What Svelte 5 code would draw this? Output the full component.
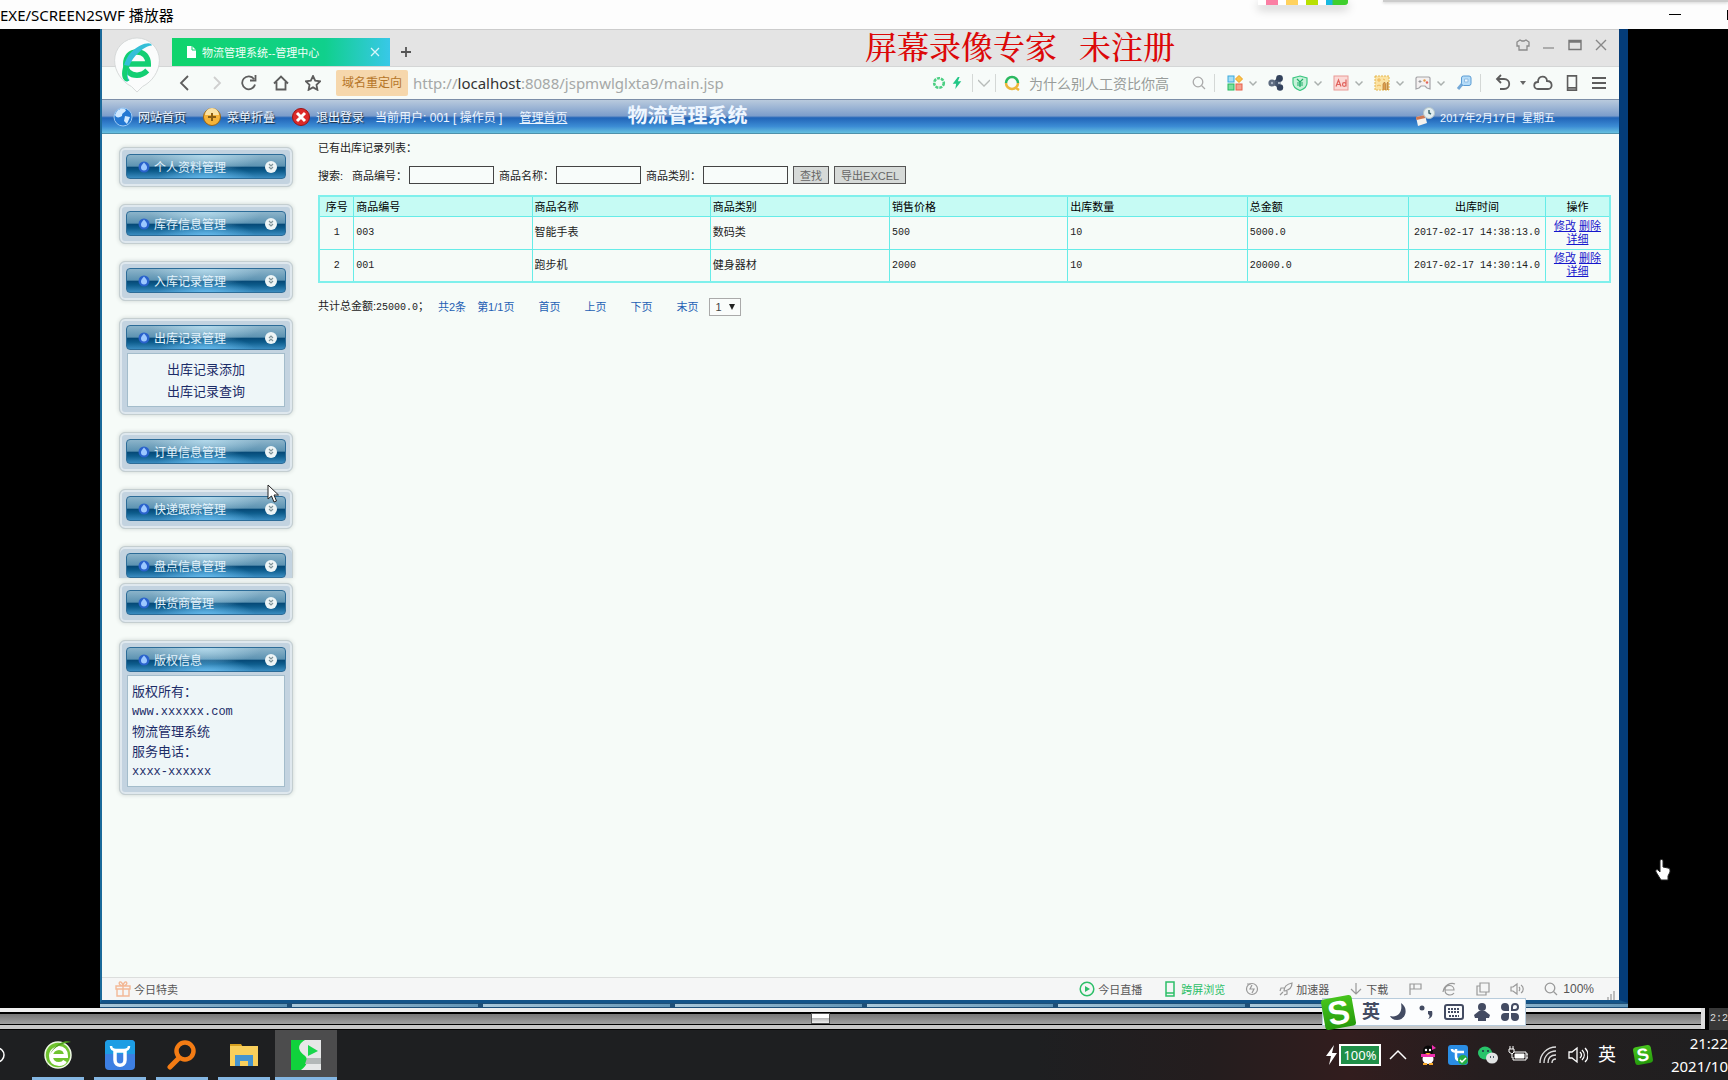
<script lang="ts">
  const columns = [
    { title: "序号", width: 2.7, center: true },
    { title: "商品编号", width: 13.8 },
    { title: "商品名称", width: 13.8 },
    { title: "商品类别", width: 13.9 },
    { title: "销售价格", width: 13.8 },
    { title: "出库数量", width: 13.9 },
    { title: "总金额", width: 12.5 },
    { title: "出库时间", width: 10.6, center: true },
    { title: "操作", width: 5, center: true },
  ];

  const records = [
    ["1", "003", "智能手表", "数码类", "500", "10", "5000.0", "2017-02-17 14:38:13.0"],
    ["2", "001", "跑步机", "健身器材", "2000", "10", "20000.0", "2017-02-17 14:30:14.0"],
  ];

  const menus = [
    { title: "个人资料管理" },
    { title: "库存信息管理" },
    { title: "入库记录管理" },
    { title: "出库记录管理", items: ["出库记录添加", "出库记录查询"] },
    { title: "订单信息管理" },
    { title: "快递跟踪管理" },
    { title: "盘点信息管理", cut: true },
    { title: "供货商管理" },
    {
      title: "版权信息",
      lines: ["版权所有：", "www.xxxxxx.com", "物流管理系统", "服务电话：", "xxxx-xxxxxx"],
    },
  ];

  const filters = [
    { id: "code", label: "商品编号：" },
    { id: "name", label: "商品名称：" },
    { id: "kind", label: "商品类别：" },
  ];

  const pages = ["首页", "上页", "下页", "末页"];
  const extensions = ["grid", "share", "shield", "ad", "shot", "game", "key"];
  const apps = ["browser", "bull", "search", "folder", "player"];
  const tasks = [0, 1, 2, 3, 4, 5, 6, 7];
</script>

{#snippet chevron()}
  <svg class="chev" viewBox="0 0 8 8"><path d="M0.5 2.5 4 6 7.500 2.500" fill="none" stroke="#aab0ae" stroke-width="1.500" /></svg>
{/snippet}

{#snippet magnifier(color)}
  <svg class="i14" viewBox="0 0 14 14" fill="none" stroke={color} stroke-width="1.300"><circle cx="6" cy="6" r="4.800" /><path d="M9.500 9.500 13 13" /></svg>
{/snippet}

{#snippet extension(name)}
  <svg class="i16" viewBox="0 0 16 16" fill="none">
    {#if name === "grid"}
      <rect x="1" y="1" width="6" height="6" fill="#a5ddf5" stroke="#3ba9dc" />
      <path d="M12 .5 15.500 4 12 7.500 8.500 4Z" fill="#f8c44c" stroke="#ef9d1a" />
      <rect x="1" y="9" width="6" height="6" fill="#7ddf9f" stroke="#25b95f" />
      <rect x="9" y="9" width="6" height="6" fill="#f5a08f" stroke="#e8604a" />
    {:else if name === "share"}
      <path d="M5 8 11 3M5 8l7 5M5 8h6" stroke="#46566e" stroke-width="2" />
      <circle cx="4" cy="8" r="3.600" fill="#5d6b80" /><circle cx="11.500" cy="3.500" r="3.400" fill="#33425c" />
      <circle cx="12" cy="12.500" r="3.200" fill="#33425c" /><circle cx="10" cy="8" r="2.500" fill="#46566e" />
      <circle cx="4" cy="8" r="1.200" fill="#a9b5c4" /><circle cx="11" cy="8" r="1" fill="#cfd8e2" />
    {:else if name === "shield"}
      <path d="M8 1 15 3v5c0 4-3 6-7 7.500C4 14 1 12 1 8V3Z" fill="#c5f1d8" stroke="#3cc681" stroke-width="1.200" />
      <path d="m5 4 3 3 3-3M8 7v5M5 8h6M5 10h6" stroke="#1fae69" stroke-width="1.200" />
    {:else if name === "ad"}
      <rect x="1" y="1" width="14" height="14" fill="#fbd9d6" stroke="#e99a96" />
      <path d="M3 11.500 5.500 5 8 11.500M4 9.500h3M13 4.500v7M13 9.500c0-2.500-3.500-2.500-3.500 0s3.500 2.500 3.500 0" stroke="#e0625c" stroke-width="1.200" />
    {:else if name === "shot"}
      <rect x="1" y="1" width="14" height="14" fill="#fbe3a4" stroke="#e4b64e" stroke-dasharray="2 1" />
      <path d="M4 4h2v2H4zM9 4l2 1M3 11l2-1 2 1" stroke="#f0b85a" stroke-width="1" />
      <path d="M9 15V9l1.500-2 1 2v6M13 15V8l1-1v8" fill="#e0a04c" stroke="#b9803c" stroke-width=".8" />
    {:else if name === "game"}
      <path d="M2 2h12l1 1v11l-3-1-2-2H6l-2 2-3 1V3Z" fill="#f4f1f1" stroke="#a5a5a8" stroke-width="1.200" />
      <path d="M3.500 6.500h3M5 5v3" stroke="#97979a" /><circle cx="9.500" cy="5.500" r="1.200" fill="#e89a4a" /><circle cx="12" cy="7.500" r="1.200" fill="#e0645a" />
    {:else}
      <path d="M7 8 2 14" stroke="#75a9d8" stroke-width="3" />
      <rect x="5.500" y="1" width="9.500" height="9.500" rx="2" fill="#b5dcf8" stroke="#5b9cd4" />
      <path d="M8.500 4h3.500v3H8.500z" fill="#edf7ff" stroke="#8fbde4" />
    {/if}
  </svg>
{/snippet}

<div class="screen">
  <header class="player-title">
    <span class="caption">EXE/SCREEN2SWF 播放器</span>
    <div class="sticker"><i class="pink"></i><i class="yellow"></i><i class="lime"></i><i class="green"></i></div>
    <div class="top-shadow"></div>
    <button class="player-min" aria-label="最小化"></button>
    <span class="player-max"></span>
  </header>

  <div class="stage">
    <div class="browser">
      <div class="tab-strip">
        <div class="logo">
          <svg viewBox="0 0 50 60">
            <path d="M25 1a24 24 0 0 1 24 24c0 12-8 23-18 28l-6 6-6-6C9 48 1 37 1 25A24 24 0 0 1 25 1Z" fill="#fbfcfc" stroke="#d4d7d7" />
            <path d="M13 29h24c0-8-5-13-12-13s-12 5-12 13 5 12 12 12c5 0 8-2 11-5" fill="none" stroke="#12cf72" stroke-width="6" />
            <path d="M41 9C40 4 28 7 19 16 11 24 7 40 12 47c1 1 3 1 5-1-4-3-2-15 4-23S35 9 41 9Z" fill="#35bfd8" />
            <path d="M11 30c-4 9-2 20 6 17-4-1-3-10 0-16Z" fill="#12cf72" />
          </svg>
        </div>
        <div class="tab">
          <svg class="i12" viewBox="0 0 12 12"><path d="M2 0h5l4 4v8H2Z" fill="#fff" /><path d="M7 0v4h4" fill="none" stroke="#12cf72" /></svg>
          <span>物流管理系统--管理中心</span>
          <button aria-label="关闭标签"><svg class="i10" viewBox="0 0 10 10"><path d="m1 1 8 8M9 1 1 9" stroke="#d8f6fa" stroke-width="1.300" /></svg></button>
        </div>
        <button class="new-tab" aria-label="新建标签"><svg class="i10" viewBox="0 0 10 10"><path d="M5 0v10M0 5h10" stroke="#555" stroke-width="1.800" /></svg></button>
        <div class="window-buttons">
          <button aria-label="皮肤"><svg class="i14" viewBox="0 0 14 14"><path d="M4 2 1 4v4h2v4h8V8h2V4l-3-2-2 1H6Z" fill="none" stroke="#8a8a8a" stroke-width="1.300" /></svg></button>
          <button aria-label="最小化"><svg class="i14" viewBox="0 0 14 14"><path d="M1 10h11" stroke="#9a9a9a" stroke-width="1.500" /></svg></button>
          <button aria-label="最大化"><svg class="i14" viewBox="0 0 14 14"><path d="M1 2.500h12v9H1ZM1 4h12" fill="none" stroke="#777" stroke-width="1.400" /></svg></button>
          <button aria-label="关闭"><svg class="i14" viewBox="0 0 14 14"><path d="m2 2 10 10M12 2 2 12" stroke="#888" stroke-width="1.400" /></svg></button>
        </div>
      </div>

      <div class="toolbar">
        <div class="nav">
          <button aria-label="后退"><svg class="i16" viewBox="0 0 16 16"><path d="M11 1 4 8l7 7" /></svg></button>
          <button aria-label="前进" class="faint"><svg class="i16" viewBox="0 0 16 16"><path d="m5 2 6 6-6 6" /></svg></button>
          <button aria-label="刷新"><svg class="i16" viewBox="0 0 16 16"><path d="M14 9.500A6.500 6.500 0 1 1 13 4M14.500 0v5.500H9" /></svg></button>
          <button aria-label="主页"><svg class="i16" viewBox="0 0 16 16"><path d="M1 8.500 8 1.500l7 7M3.500 7v7.500h9V7" /></svg></button>
          <button aria-label="收藏"><svg class="i16" viewBox="0 0 16 16"><path d="m8 1 2.200 4.600 5 .7-3.700 3.500.9 5L8 12.400l-4.400 2.400.9-5L.8 6.300l5-.7Z" /></svg></button>
        </div>
        <span class="redirect">域名重定向</span>
        <span class="url">http://<b>localhost</b>:8088/jspmwlglxta9/main.jsp</span>
        <div class="tools">
          <svg class="i14" viewBox="0 0 14 14"><circle cx="7" cy="7" r="4.800" fill="none" stroke="#4ccf83" stroke-width="2.600" stroke-dasharray="3 1" /></svg>
          <svg class="i12 bolt" viewBox="0 0 12 14"><path d="M7 0 1 8h4L4 14l7-9H7l2-5Z" fill="#22c787" /></svg>
          <span class="sep"></span>
          <svg class="i12" viewBox="0 0 12 12"><path d="m0 3 6 6 6-6" fill="none" stroke="#b8bcba" stroke-width="1.300" /></svg>
          <span class="sep"></span>
          <svg class="i16 engine" viewBox="0 0 16 16" fill="none" stroke-width="2.500"><path d="M2 8a6 6 0 0 1 12 0" stroke="#2bb960" /><path d="M2 8a6 6 0 0 0 12 0M12 13l3 2" stroke="#eeb73b" /></svg>
          <input class="search" type="text" aria-label="搜索" value="为什么别人工资比你高" />
          {@render magnifier("#aaa")}
          <span class="sep wide"></span>
          {#each extensions as name}
            <button class="ext" aria-label={name}>
              {@render extension(name)}
              {#if name !== "share" && name !== "key"}{@render chevron()}{/if}
            </button>
          {/each}
          <span class="sep"></span>
          <div class="actions">
            <svg class="i20" viewBox="0 0 20 20"><path d="M4 6h7c7 0 7 10 0 10H7M8 2 4 6l4 4" /></svg>
            <svg class="dot" viewBox="0 0 6 4"><path class="fill" d="M0 0h6L3 4Z" /></svg>
            <svg class="i20" viewBox="0 0 20 20"><path d="M5 16c-5 0-5-7 0-7 0-7 9-7 9-1 6 0 6 8 1 8Z" /></svg>
            <svg class="i16" viewBox="0 0 16 18"><path d="M3 1h10v16H3ZM3 14.500h10" /></svg>
            <svg class="i16" viewBox="0 0 16 16"><path d="M1 3h14M1 8h14M1 13h14" /></svg>
          </div>
        </div>
      </div>

      <div class="page-head">
        <a href="#home" class="shade">
          <svg class="i20" viewBox="0 0 20 20"><circle cx="10" cy="10" r="9" fill="#2377d2" stroke="#9ccaf4" /><path d="M2 8C4 1 11 0 13 3c-1 3-4 2-4 6-3 2-6 2-7-1ZM12 9l5 1-3 7-3-3Z" fill="#cfe8ff" /></svg>
          网站首页
        </a>
        <a href="#fold" class="shade">
          <svg class="i20" viewBox="0 0 20 20"><circle cx="10" cy="10" r="8.500" fill="#f6b43a" stroke="#9a6414" /><path d="M3 8a7 7 0 0 1 14 0Z" fill="#fbe2a4" /><path d="M10 6v8M6 10h8" stroke="#8a5e14" stroke-width="2" /></svg>
          菜单折叠
        </a>
        <a href="#exit" class="shade">
          <svg class="i20" viewBox="0 0 20 20"><circle cx="10" cy="10" r="8.500" fill="#dc2a2a" stroke="#9c1414" /><path d="m6 6 8 8M14 6l-8 8" stroke="#fff" stroke-width="3" /></svg>
          退出登录
        </a>
        <span class="user">当前用户: 001 [ 操作员 ]</span>
        <a href="#index" class="under">管理首页</a>
        <h1>物流管理系统</h1>
        <div class="date">
          <svg class="i20" viewBox="0 0 20 20"><path d="m1 10 9-2 2 8-9 3Z" fill="#f5f2ee" /><path d="m1 10 9-2 .5 3-9 2Z" fill="#cf7752" /><circle cx="14" cy="6" r="5.500" fill="#e3eef0" stroke="#b4c4c8" /><path d="M14 3v3l2 1" fill="none" stroke="#3f6a74" stroke-width="1.500" /></svg>
          2017年2月17日&nbsp; 星期五
        </div>
      </div>

      <div class="page">
        <nav class="sidebar">
          {#each menus as menu}
            <section class="panel" class:cut={menu.cut}>
              <button class="panel-head">
                <svg class="i12" viewBox="0 0 12 12"><circle cx="6" cy="6" r="5.500" fill="#2a62cc" /><path d="M6 1.500c2 2 3 3.500 3 5a3 3 0 0 1-6 0c0-1.500 1-3 3-5Z" fill="#9cc8ff" /></svg>
                <span>{menu.title}</span>
                <svg class="i12 fold" viewBox="0 0 12 12"><circle cx="6" cy="6" r="6" fill="#eef5f6" /><path d={menu.items ? "m4 6 2-2 2 2M4 9l2-2 2 2" : "m4 3 2 2 2-2M4 6l2 2 2-2"} fill="none" stroke="#7f9398" stroke-width="1.200" /></svg>
              </button>
              {#if menu.items}
                <div class="panel-body links">
                  {#each menu.items as item}<a href="#record">{item}</a>{/each}
                </div>
              {/if}
              {#if menu.lines}
                <div class="panel-body about">
                  {#each menu.lines as line}<span class:latin={/^[wx]/.test(line)}>{line}</span>{/each}
                </div>
              {/if}
            </section>
          {/each}
        </nav>

        <main>
          <div class="list-title">已有出库记录列表：</div>
          <form class="filters">
            <span class="lead">搜索:</span>
            {#each filters as filter}
              <label for={filter.id}>{filter.label}</label>
              <input id={filter.id} type="text" />
            {/each}
            <button type="button">查找</button>
            <button type="button">导出EXCEL</button>
          </form>
          <table>
            <colgroup>
              {#each columns as column}<col style="width: {column.width}%" />{/each}
            </colgroup>
            <thead>
              <tr>
                {#each columns as column}<th class:center={column.center}>{column.title}</th>{/each}
              </tr>
            </thead>
            <tbody>
              {#each records as record}
                <tr>
                  {#each record as value, i}<td class:center={columns[i].center} class:num={/^\d/.test(value)}>{value}</td>{/each}
                  <td class="ops"><a href="#edit">修改</a> <a href="#delete">删除</a><br /><a href="#detail">详细</a></td>
                </tr>
              {/each}
            </tbody>
          </table>
          <div class="pager">
            <span class="total">共计总金额:<span class="num">25000.0</span>；</span>
            <span class="count">共2条</span>
            <span class="count">第1/1页</span>
            {#each pages as page}<a href="#page">{page}</a>{/each}
            <span class="pick"><select aria-label="页码"><option>1</option></select></span>
          </div>
        </main>
      </div>

      <footer class="status">
        <svg class="i16" viewBox="0 0 16 16" fill="none" stroke="#f3b896" stroke-width="1.400"><path d="M1 5h14v3H1ZM2 8v7h12V8M8 5v10M8 5C5 5 3 2 5 1s3 4 3 4 1-5 3-4-0 4-3 4" /></svg>
        <span>今日特卖</span>
        <div class="status-right">
          <span class="item"><svg class="i16" viewBox="0 0 16 16"><circle cx="8" cy="8" r="6.800" fill="none" stroke="#2cbf68" stroke-width="1.500" /><path d="m6 5 5 3-5 3Z" fill="#2cbf68" /></svg>今日直播</span>
          <span class="item green"><svg class="i16" viewBox="0 0 16 16"><path d="M4 1h8v14H4ZM4 12h8" fill="none" stroke="#2cbf68" stroke-width="1.500" /></svg>跨屏浏览</span>
          <svg class="i14 line" viewBox="0 0 14 14"><circle cx="7" cy="7" r="5.500" /><path d="M2 2h4M7 3 5 7h4l-2 4" /></svg>
          <span class="item"><svg class="i14 line" viewBox="0 0 14 14"><path d="M5 9C5 5 8 2 13 1c0 5-3 7-7 8ZM5 6H2L1 9M8 9v3l-3 1M4 10l-3 3" /></svg>加速器</span>
          <span class="item"><svg class="i14 line" viewBox="0 0 14 14"><path d="M7 1v11M2 7l5 5 5-5" /></svg>下载</span>
          <div class="status-icons">
            <svg class="i14 line" viewBox="0 0 14 14"><path d="M2 13V2h11v5H2M6 2v5" /></svg>
            <svg class="i14 line" viewBox="0 0 14 14"><path d="M3 8h9c0-6-9-6-9 0s7 6 9 3M1 10C2 3 9 0 13 2" /></svg>
            <svg class="i14 line" viewBox="0 0 14 14"><path d="M4 1h9v9H4ZM4 4H1v9h9v-3" /></svg>
            <svg class="i14 line" viewBox="0 0 14 14"><path d="M1 5h2l4-3v10L3 9H1ZM9 5c1 1 1 3 0 4M11 3c3 2 3 6 0 8" /></svg>
          </div>
          <span class="item zoom">{@render magnifier("#999")}100%</span>
          <svg class="grip" viewBox="0 0 8 10"><path d="M1 10V7M4 10V4M7 10V1" stroke="#aaa" stroke-width="1.500" /></svg>
        </div>
      </footer>

      <div class="watermark"><span>屏幕录像专家</span><span>未注册</span></div>
      <svg class="cursor" viewBox="0 0 12 20"><path d="M1 1v14l3.500-3 2.500 6 2.500-1-2.500-6h4.500Z" fill="#fff" stroke="#222" /></svg>
    </div>
    <div class="old-taskbar">{#each tasks as task}<i></i>{/each}</div>
    <svg class="hand" viewBox="0 0 16 22"><path d="M5 2c0-2 3-2 3 0v6l5 1c2 0 2 2 2 4l-2 4v4H6l-5-8c-1-2 1-3 2-2l2 2Z" fill="#fff" stroke="#222" /></svg>
  </div>

  <div class="seek">
    <input type="range" aria-label="进度" min="0" max="1000" value="482" />
    <span class="time">2:2</span>
    <div class="ime">
      <span class="sogou">S</span>
      <span class="ime-text">英</span>
      <svg class="i20" viewBox="0 0 20 20"><path d="M13 1c8 5 5 17-4 17-4 0-6-2-7-4 7 2 13-3 11-13Z" fill="#434b62" /></svg>
      <svg class="i20" viewBox="0 0 20 20"><circle cx="6" cy="6" r="2.500" fill="#434b62" /><path d="M12 9h4c1 4 0 7-4 8 2-2 2-4 0-5Z" fill="#434b62" /></svg>
      <svg class="i20" viewBox="0 0 20 20" fill="none" stroke="#434b62"><rect x="1" y="3" width="18" height="14" rx="2" stroke-width="2" /><path d="M4 7h12M4 10h12M5 14h10" stroke-width="2" stroke-dasharray="2 1" /></svg>
      <svg class="i20" viewBox="0 0 20 20"><circle cx="10" cy="5" r="4" fill="#434b62" /><path d="M7 9h6l5 4-1 3h-3v3H6v-3H3l-1-3Z" fill="#434b62" /></svg>
      <svg class="i20" viewBox="0 0 20 20" fill="#434b62"><path d="M9 9H5a4 4 0 1 1 4-4ZM9 11v4a4 4 0 1 1-4-4ZM11 11h4a4 4 0 1 1-4 4Z" /><path d="M12 8V5a3 3 0 1 1 3 3Z" fill="none" stroke="#434b62" stroke-width="2" /></svg>
    </div>
  </div>

  <div class="taskbar">
    <svg class="cortana" viewBox="0 0 5 16"><circle cx="-3" cy="8" r="7" fill="none" stroke="#fff" stroke-width="1.500" /></svg>
    {#each apps as app}
      <button class="app" class:active={app === "player"} aria-label={app}>
        <svg viewBox="0 0 30 30">
          {#if app === "browser"}
            <circle cx="15" cy="15" r="13" fill="#6fc32f" stroke="#eef8e4" stroke-width="1.500" />
            <path d="M8 16h15c0-5-3-8-7-8s-8 3-8 8 3 8 8 8c3 0 5-1 6-3" fill="none" stroke="#fff" stroke-width="4" />
            <path d="M28 2C18-2 2 12 5 29c-3-12 5-25 23-27Z" fill="#4fa01e" />
          {:else if app === "bull"}
            <rect width="30" height="30" rx="4" fill="#3d7fe2" /><path d="M0 4a4 4 0 0 1 4-4h22a4 4 0 0 1 4 4v10H0Z" fill="#1d9de4" />
            <path d="M6 6c0 3 2 4 5 4h8c3 0 5-1 5-4" fill="none" stroke="#fff" stroke-width="2.500" />
            <path d="M10 11v9c0 7 10 7 10 0v-9Z" fill="none" stroke="#fff" stroke-width="3.500" />
          {:else if app === "search"}
            <circle cx="18" cy="11" r="8.500" fill="none" stroke="#f47c14" stroke-width="4.500" /><path d="m12 18-9 9" stroke="#f47c14" stroke-width="5" stroke-linecap="round" />
          {:else if app === "folder"}
            <path d="M1 4h11l2 3H1Z" fill="#d7a020" /><path d="M1 6h28v20H1Z" fill="#f9cf5b" />
            <path d="M6 26V15h18v11h-5v-5h-8v5Z" fill="#4594cf" />
          {:else}
            <rect width="30" height="30" fill="#e6e8e8" /><path d="M0 0h14c-10 6-5 12-1 15 5 4 4 10-3 15H0Z" fill="#10d23c" />
            <path d="M17 5v11l10-5Z" fill="#19d64c" /><path d="M16 18h14v6H14Z" fill="#b3b8b8" />
          {/if}
        </svg>
      </button>
    {/each}
    <div class="tray">
      <svg class="i20 charge" viewBox="0 0 20 20"><path d="M13 0 5 11h5l-2 9 8-12h-5Z" fill="#fff" /></svg>
      <span class="battery">100%</span>
      <svg class="i20" viewBox="0 0 20 20"><path d="m2 14 8-8 8 8" fill="none" stroke="#fff" stroke-width="1.500" /></svg>
      <svg class="i20" viewBox="0 0 20 20"><ellipse cx="10" cy="6" rx="5" ry="5.500" fill="#080808" /><ellipse cx="10" cy="14" rx="5.500" ry="5" fill="#fff" /><path d="M3 9h14v3H3ZM14 0l4 3-4 2Z" fill="#ed2fae" /><path d="M7 8h6l-3 2ZM5 18h4v2H5ZM11 18h4v2h-4Z" fill="#f9a92a" /><circle cx="8" cy="5" r="1.200" fill="#fff" /><circle cx="12" cy="5" r="1.200" fill="#fff" /></svg>
      <svg class="i20" viewBox="0 0 20 20"><rect width="20" height="20" rx="3" fill="#2a8de4" /><path d="M4 4c0 3 3 3 12 3M8 4v8c0 4 6 4 6 1" fill="none" stroke="#fff" stroke-width="2.500" /><circle cx="15" cy="15" r="5" fill="#24ad45" /><path d="m12 15 2 2 4-4" fill="none" stroke="#fff" stroke-width="1.500" /></svg>
      <svg class="i20" viewBox="0 0 20 20"><ellipse cx="7" cy="8" rx="7" ry="6.500" fill="#28c46a" /><ellipse cx="14" cy="13" rx="6" ry="5.500" fill="#e2e4e4" /><path d="M4 6h2M9 6h2M12 12h1M15 12h1" stroke="#234" stroke-width="1.500" /></svg>
      <svg class="i20" viewBox="0 0 20 20" fill="none" stroke="#fff"><path d="M6 7h12v8H5v-3M18 9h2v4h-2M1 4h5v3l-2 2-3-2ZM2 4V1M5 4V1M4 9v4" /><path d="M7 9h9v4H7Z" fill="#fff" /></svg>
      <svg class="i20" viewBox="0 0 20 20" fill="none" stroke="#ddd" stroke-width="1.400"><path d="M2 18C2 9 9 2 18 2M6 18c0-7 5-12 12-12M10 18c0-5 3-8 8-8M14 18c0-3 2-4 4-4" /></svg>
      <svg class="i20" viewBox="0 0 20 20" fill="none" stroke="#fff" stroke-width="1.300"><path d="M1 7h3l5-4v14l-5-4H1ZM12 7c2 2 2 4 0 6M14 5c3 3 3 7 0 10M17 3c4 4 4 10 0 14" /></svg>
      <span class="lang">英</span>
      <span class="sogou small">S</span>
      <div class="clock"><span>21:22</span><span>2021/10</span></div>
    </div>
  </div>
</div>

<style>
  :global(body) {
    margin: 0;
    background: #000;
  }

  .screen {
    display: flex;
    flex-direction: column;
    min-height: 100vh;
    overflow: hidden;
    font-family: "Liberation Sans", "Noto Sans CJK SC", sans-serif;
    font-size: 11px;
    color: #222;
  }

  .screen * {
    box-sizing: border-box;
  }

  button {
    display: flex;
    align-items: center;
    padding: 0;
    border: 0;
    background: none;
    font: inherit;
    color: inherit;
  }

  svg {
    display: block;
    flex-shrink: 0;
  }

  .i10 { width: 10px; height: 10px; }
  .i12 { width: 12px; height: 12px; }
  .i14 { width: 14px; height: 14px; }
  .i16 { width: 16px; height: 16px; }
  .i20 { width: 20px; height: 20px; }
  .chev { width: 8px; height: 8px; }

  /* player window */
  .player-title {
    position: relative;
    display: flex;
    align-items: center;
    height: 29px;
    background: #fdfdfd;
  }

  .caption {
    font-family: "Noto Sans", "Noto Sans CJK SC", sans-serif;
    font-size: 15px;
    line-height: 20px;
    color: #000;
  }

  .sticker {
    position: absolute;
    top: 0;
    left: 1258px;
    display: flex;
    gap: 8px;
    height: 5px;
    padding-left: 8px;
    background: #fff;
    box-shadow: 0 4px 10px rgba(0, 0, 0, 0.25);
  }

  .sticker i { width: 12px; }
  .pink { background: #fb7fa4; }
  .yellow { background: #ffd25e; }
  .lime { background: #b8e000; }
  .sticker .green {
    width: 22px;
    background: linear-gradient(90deg, #18b8e0 25%, #3fcf2c 35%);
    border-radius: 0 0 3px 0;
  }

  .top-shadow {
    position: absolute;
    top: 0;
    right: 0;
    width: 345px;
    height: 2px;
    background: #ccc;
    box-shadow: 0 1px 3px #ccc;
  }

  .player-min {
    width: 12px;
    height: 1px;
    margin-left: auto;
    background: #000;
  }

  .player-max {
    width: 1px;
    height: 10px;
    margin-left: 46px;
    background: #000;
  }

  .stage {
    position: relative;
    display: flex;
    flex-direction: column;
    flex: 1;
    padding: 0 100px;
    background: #000;
  }

  /* recorded browser */
  .browser {
    position: relative;
    display: flex;
    flex-direction: column;
    flex: 1;
    border-left: 2px solid #1c6a9a;
    border-right: 9px solid #043c78;
    border-bottom: 3px solid #135489;
    background: #f6fbf8;
  }

  .tab-strip {
    display: flex;
    align-items: flex-end;
    height: 37px;
    border-top: 1px solid #ccc;
    background: #e4e4e4;
  }

  .logo {
    align-self: flex-start;
    width: 50px;
    height: 29px;
    margin: 7px 10px 0;
    z-index: 1;
  }

  .logo svg {
    width: 50px;
    height: 56px;
  }

  .tab {
    display: flex;
    align-items: center;
    width: 218px;
    height: 28px;
    padding: 0 10px 0 13px;
    background: linear-gradient(90deg, #10d46c, #10d08c 70%, #38c8e8);
    color: #f2fff8;
    font-size: 11px;
  }

  .tab span { margin: 0 auto 0 5px; }

  .new-tab { margin: 0 0 9px 11px; }

  .window-buttons {
    display: flex;
    gap: 12px;
    margin: 0 11px 14px auto;
  }

  .toolbar {
    display: flex;
    align-items: center;
    height: 33px;
    border-top: 1px solid #d4d6d6;
    background: #f7fbf9;
  }

  .nav {
    display: flex;
    gap: 16px;
    padding: 0 15px 0 75px;
  }

  .nav path,
  .actions path {
    fill: none;
    stroke: #5d5d5d;
    stroke-width: 1.8;
  }

  .nav .faint path { stroke: #cfcfcf; }

  .redirect {
    padding: 0 6px;
    background: #f6d7ac;
    border-radius: 2px;
    color: #b57528;
    font-size: 12px;
    line-height: 26px;
  }

  .url {
    margin-left: 5px;
    font-family: "Noto Sans", sans-serif;
    font-size: 15px;
    line-height: 22px;
    color: #a5a8a7;
  }

  .url b {
    font-weight: 400;
    color: #333;
  }

  .tools {
    display: flex;
    align-items: center;
    margin-left: auto;
  }

  .bolt { margin: 0 9px 0 5px; }

  .sep {
    width: 1px;
    height: 18px;
    margin-right: 5px;
    background: #d4d8d6;
  }

  .tools > .i12:not(.bolt) { margin-right: 5px; }
  .tools .engine { margin-left: 3px; }
  .sep.wide { margin: 0 12px 0 8px; }

  .search {
    width: 159px;
    margin: 0 4px 0 9px;
    padding: 0;
    border: 0;
    background: none;
    outline: none;
    font: inherit;
    font-size: 14px;
    color: #989c9a;
  }

  .ext {
    gap: 6px;
    margin-right: 11px;
  }

  .ext:nth-of-type(2),
  .ext:nth-of-type(7) { margin-right: 8px; }

  .actions {
    display: flex;
    align-items: center;
    gap: 11px;
    padding: 0 12px 0 7px;
  }

  .actions .dot {
    width: 6px;
    height: 4px;
    margin: 0 -4px;
  }

  .actions .fill {
    fill: #666;
    stroke: none;
  }

  /* site header */
  .page-head {
    display: flex;
    align-items: center;
    height: 35px;
    padding: 0 64px 0 11px;
    border-top: 1px solid #7c8ea8;
    border-bottom: 1px solid #4e91ab;
    background: linear-gradient(#b9cadd, #7c9dcb 48%, #2164b8 54%, #3c8cd4 80%, #66c0e0);
    color: #eef6ff;
    font-size: 12px;
  }

  .page-head a {
    display: flex;
    align-items: center;
    color: inherit;
    text-decoration: none;
  }

  .page-head .shade {
    gap: 5px;
    margin-right: 16px;
    text-shadow: 1px 1px 1px #1c2c3c;
  }

  .user { margin: 0 17px 0 -5px; }

  .page-head .under { text-decoration: underline; }

  .page-head h1 {
    margin: 0 0 1px 60px;
    font-size: 20px;
    line-height: 24px;
  }

  .date {
    display: flex;
    align-items: center;
    gap: 5px;
    margin-left: auto;
    font-size: 11px;
  }

  /* page body */
  .page {
    display: flex;
    flex: 1;
    align-items: flex-start;
    padding: 0 8px 0 17px;
  }

  .sidebar {
    display: flex;
    flex-direction: column;
    gap: 17px;
    width: 174px;
    padding-top: 13px;
    margin-right: 25px;
    flex-shrink: 0;
  }

  .panel {
    padding: 6px 6px 7px;
    border: 1px solid #c4ced0;
    border-radius: 6px;
    background: #c3d3e0;
    box-shadow: inset 0 0 0 2px #dfe8ee, 0 0 4px #ccd4d2;
  }

  .panel.cut {
    padding-bottom: 0;
    margin-bottom: -12px;
    border-bottom: 0;
    border-radius: 6px 6px 0 0;
    box-shadow: inset 0 2px 0 #dfe8ee, 0 0 4px #ccd4d2;
  }

  .panel-head {
    width: 100%;
    height: 25px;
    padding: 0 8px 0 11px;
    border: 1px solid #2c6c98;
    border-radius: 4px;
    background:
      radial-gradient(ellipse at 50% 110%, rgba(110, 195, 245, 0.9), transparent 45%),
      radial-gradient(ellipse at 50% 0, rgba(195, 232, 248, 0.7), transparent 50%),
      linear-gradient(#8cb4ca, #5d93b2 48%, #064a78 54%, #0d5c8c 70%, #3a8cc0);
    color: #e3f3fc;
    font-size: 12px;
    line-height: 16px;
  }

  .panel-head span { margin: 2px auto 0 4px; }

  .panel-body {
    display: flex;
    flex-direction: column;
    margin: 3px 1px 0;
    border: 1px solid #a3bccb;
    background: #eef6f8;
    color: #1c2c68;
    font-size: 13px;
  }

  .links {
    align-items: center;
    gap: 2px;
    padding: 6px 0 4px;
    line-height: 20px;
  }

  .links a {
    color: inherit;
    text-decoration: none;
  }

  .about {
    padding: 6px 4px 4px;
    line-height: 20px;
  }

  .latin {
    font-family: "Liberation Mono", monospace;
    font-size: 12px;
  }

  main {
    flex: 1;
    min-width: 0;
    padding-top: 5px;
  }

  .list-title { line-height: 18px; }

  .filters {
    display: flex;
    align-items: center;
    height: 18px;
    margin: 9px 0 11px;
  }

  .filters .lead { margin-right: 9px; }

  .filters label {
    width: 57px;
    white-space: nowrap;
  }

  .filters input {
    width: 85px;
    height: 18px;
    margin-right: 5px;
    border: 1px solid #444;
    background: #f8fcfa;
  }

  .filters button {
    height: 18px;
    padding: 0 6px;
    margin-right: 5px;
    border: 1px solid #555;
    background: #d6dad8;
    color: #666;
  }

  table {
    width: 100%;
    table-layout: fixed;
    border-collapse: collapse;
    border: 2px solid #7ff0ec;
  }

  th {
    height: 20px;
    padding: 0 2px;
    border: 1px solid #66ece8;
    background: #c6fbf4;
    font-weight: 400;
    text-align: left;
    color: #000;
  }

  td {
    height: 33px;
    padding: 0 2px;
    border: 1px solid #66ece8;
    line-height: 13px;
  }

  .num {
    font-family: "Liberation Mono", monospace;
    font-size: 10px;
  }

  .center,
  .ops { text-align: center; }

  .ops a { color: #1616cc; }

  .pager {
    display: flex;
    align-items: center;
    margin-top: 14px;
    line-height: 18px;
    color: #2460b4;
  }

  .total {
    width: 120px;
    color: #222;
    white-space: nowrap;
  }

  .count { margin-right: 11px; }

  .pager a {
    margin: 0 11px 0 13px;
    color: inherit;
    text-decoration: none;
  }

  .pick {
    position: relative;
    display: flex;
  }

  .pick::after {
    content: "";
    position: absolute;
    top: 6px;
    right: 6px;
    border: 3px solid transparent;
    border-top: 6px solid #222;
    pointer-events: none;
  }

  select {
    width: 32px;
    height: 18px;
    padding: 0 5px;
    border: 1px solid #aaa;
    background: #fafcfb;
    appearance: none;
    font: inherit;
    line-height: 16px;
    color: #444;
  }

  /* browser status bar */
  .status {
    display: flex;
    align-items: center;
    gap: 3px;
    height: 23px;
    padding: 0 4px 0 13px;
    border-top: 1px solid #dcdedd;
    background: #f5f6f6;
    color: #555;
  }

  .status-right {
    display: flex;
    align-items: center;
    gap: 20px;
    margin-left: auto;
  }

  .item {
    display: flex;
    align-items: center;
    gap: 3px;
  }

  .item.green { color: #2cbf68; }

  .line {
    fill: none;
    stroke: #999;
    stroke-width: 1.2;
  }

  .status-icons {
    display: flex;
    gap: 20px;
  }

  .item.zoom {
    gap: 5px;
    font-size: 12px;
  }

  .grip {
    align-self: flex-end;
    width: 8px;
    height: 10px;
    margin: 0 0 -3px -7px;
  }

  .watermark {
    position: absolute;
    top: 0;
    left: 763px;
    display: flex;
    gap: 22px;
    font-family: "Noto Serif CJK SC", "Noto Sans CJK SC", serif;
    font-size: 32px;
    font-weight: 500;
    line-height: 32px;
    color: #dc0808;
  }

  .cursor {
    position: absolute;
    top: 455px;
    left: 165px;
    width: 12px;
    height: 20px;
  }

  .hand {
    position: absolute;
    right: 57px;
    bottom: 127px;
    width: 16px;
    height: 22px;
  }

  .old-taskbar {
    display: flex;
    gap: 5px;
    height: 5px;
    background: #1d4f78;
  }

  .old-taskbar i {
    flex: 1;
    margin-top: 1px;
    height: 3px;
    background: linear-gradient(90deg, #a9c8da, #5f93b5);
  }

  /* seek bar */
  .seek {
    position: relative;
    display: flex;
    height: 22px;
    background: #000;
  }

  .seek input {
    flex: 1;
    margin: 0 4px 0 0;
    appearance: none;
    height: 21px;
    background: linear-gradient(#f0f0f0 4px, #000 4px, #000 6px, #777 6px, #a0a0a0 16px, #000 16px, #000 17px, #c8c8c8 17px);
    border-right: 4px solid #ddd;
  }

  .seek input::-webkit-slider-thumb {
    appearance: none;
    width: 19px;
    height: 11px;
    border: 1px solid #555;
    background: linear-gradient(#fff 45%, #bbb 50%, #eee);
  }

  .time {
    padding-left: 1px;
    background: #383838;
    color: #ddd;
    font-family: "Liberation Mono", monospace;
    font-size: 10px;
    line-height: 21px;
  }

  .ime {
    position: absolute;
    right: 202px;
    bottom: 4px;
    display: flex;
    align-items: center;
    gap: 8px;
    height: 28px;
    padding-right: 5px;
    border: 1px solid #b8ccdc;
    background: #fcfdfe;
  }

  .sogou {
    width: 31px;
    height: 31px;
    border-radius: 3px;
    background: linear-gradient(#46c41c, #259a0c);
    transform: rotate(-10deg);
    color: #fff;
    font-size: 33px;
    font-weight: 700;
    line-height: 31px;
    text-align: center;
  }

  .ime-text {
    color: #434b62;
    font-size: 18px;
    font-weight: 700;
    line-height: 20px;
  }

  /* host taskbar */
  .taskbar {
    display: flex;
    align-items: center;
    height: 50px;
    background: linear-gradient(90deg, #1e1f21 60%, #241d1e 70%, #321d1e 78%, #251e1f 86%, #1f1f20);
    color: #fff;
  }

  .cortana {
    width: 5px;
    height: 16px;
    margin-right: 22px;
  }

  .app {
    position: relative;
    justify-content: center;
    width: 62px;
    height: 50px;
  }

  .app svg {
    width: 30px;
    height: 30px;
  }

  .app.active { background: #4c4c4d; }

  .app::after {
    content: "";
    position: absolute;
    left: 5px;
    right: 5px;
    bottom: 0;
    height: 3px;
    background: #84b6e2;
  }

  .app.active::after {
    left: 0;
    right: 0;
  }

  .tray {
    display: flex;
    align-items: center;
    gap: 10px;
    margin-left: auto;
  }

  .charge { margin-right: -12px; }

  .battery {
    width: 42px;
    margin-right: -3px;
    border: 2px solid #fff;
    background: #1f8f48;
    font-family: "Noto Sans", sans-serif;
    font-size: 13px;
    line-height: 18px;
    text-align: center;
  }

  .lang {
    font-size: 18px;
    line-height: 20px;
  }

  .sogou.small {
    width: 18px;
    height: 18px;
    margin: 0 9px 0 8px;
    font-size: 18px;
    line-height: 18px;
  }

  .clock {
    display: flex;
    flex-direction: column;
    align-items: flex-end;
    font-family: "Noto Sans", sans-serif;
    font-size: 15px;
    line-height: 23px;
  }
</style>
